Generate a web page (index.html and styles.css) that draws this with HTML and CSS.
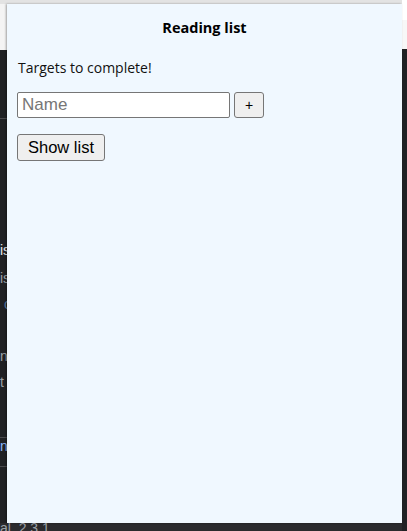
FILE: index.html
```html
<!DOCTYPE html>
<html>
<head>
<meta charset="utf-8">
<link rel="stylesheet" href="styles.css">
</head>
<body>
<div class="backdrop">
  <div class="topstrip"></div>
  <div class="bg-left">
    <div class="bg-line l1"></div>
    <span class="bg-text t1">is</span>
    <span class="bg-text t2">is</span>
    <span class="bg-text t3">c</span>
    <span class="bg-text t4">n</span>
    <span class="bg-text t5">t</span>
    <div class="bg-line l2"></div>
    <span class="bg-text t6">n</span>
    <div class="bg-line l3"></div>
  </div>
  <div class="bg-bottom"><span class="ver">al &nbsp;2.3.1</span></div>
  <div class="bg-right">
    <div class="r-white"></div>
  </div>
</div>
<div class="popup">
  <h1 class="title">Reading list</h1>
  <p class="intro">Targets to complete!</p>
  <div class="add-row">
    <input class="name-input" type="text" placeholder="Name">
    <button class="btn add-btn">+</button>
  </div>
  <button class="btn show-btn">Show list</button>
</div>
</body>
</html>
```

FILE: styles.css
```css
html, body {
  margin: 0;
  padding: 0;
}
body {
  width: 407px;
  height: 531px;
  overflow: hidden;
  background: #202124;
  font-family: "Open Sans", "Noto Sans", sans-serif;
  position: relative;
}
.backdrop {
  position: absolute;
  inset: 0;
}
.topstrip {
  position: absolute;
  left: 0;
  top: 0;
  width: 407px;
  height: 4px;
  background: #e3e3e3;
}
.bg-left {
  position: absolute;
  left: 0;
  top: 4px;
  width: 20px;
  height: 519px;
  background: #202124;
}
.bg-left::before {
  content: "";
  position: absolute;
  left: 0;
  top: 0;
  width: 20px;
  height: 46px;
  background: #f4f4f4;
}
.bg-line {
  position: absolute;
  left: 0;
  width: 20px;
  height: 1px;
  background: #4a4a4d;
}
.l1 { top: 114px; }
.l2 { top: 433px; }
.l3 { top: 462px; }
.bg-text {
  position: absolute;
  left: 0;
  font-family: "Liberation Sans", sans-serif;
  font-size: 14px;
  color: #9aa0a6;
}
.t1 { top: 238px; color: #e8eaed; }
.t2 { top: 266px; }
.t3 { top: 292px; left: 4px; color: #5d7fa8; }
.t4 { top: 344px; left: -2px; }
.t5 { top: 370px; left: 0; }
.t6 { top: 434px; left: -2px; color: #8ab4f8; }
.t4, .t6 { left: 0; letter-spacing: 0; }
.bg-bottom {
  position: absolute;
  left: 0;
  top: 523px;
  width: 407px;
  height: 8px;
  background: #2b2b2e;
  overflow: hidden;
}
.ver {
  position: absolute;
  left: 0;
  top: -3px;
  font-family: "Liberation Sans", sans-serif;
  font-size: 14px;
  line-height: 16px;
  color: #9aa0a6;
}
.bg-right {
  position: absolute;
  left: 402px;
  top: 0;
  width: 5px;
  height: 531px;
  background: #202124;
}
.r-white {
  height: 50px;
  background: #f7f7f7;
  border-top: 20px solid #fff;
  box-sizing: border-box;
  border-bottom: 1px solid #222;
}

.popup {
  position: absolute;
  left: 7px;
  top: 4px;
  width: 395px;
  height: 519px;
  box-sizing: border-box;
  padding: 0 10px;
  background: #f0f8ff;
  box-shadow: -1px 0 2px rgba(0, 0, 0, 0.35);
  display: flex;
  flex-direction: column;
  align-items: flex-start;
}
.title {
  align-self: stretch;
  margin: 14px 0 0;
  font-size: 14.5px;
  line-height: 20px;
  font-weight: 700;
  text-align: center;
  color: #000;
}
.intro {
  margin: 20px 0 0 1px;
  font-size: 14px;
  line-height: 20px;
  color: #111;
}
.add-row {
  display: flex;
  gap: 4px;
  margin-top: 14px;
}
.name-input {
  width: 213px;
  height: 26px;
  box-sizing: border-box;
  margin: 0;
  padding: 1px 4px;
  border: 1px solid #767676;
  border-radius: 2px;
  background: #fff;
  font-family: "Liberation Sans", Arial, sans-serif;
  font-size: 17px;
}
.name-input::placeholder {
  color: #767676;
}
.btn {
  box-sizing: border-box;
  margin: 0;
  border: 1px solid #767676;
  border-radius: 3px;
  background: #efefef;
  color: #000;
  font-family: "Liberation Sans", Arial, sans-serif;
}
.add-btn {
  width: 30px;
  height: 26px;
  padding: 0;
  font-size: 14px;
}
.show-btn {
  margin-top: 16px;
  height: 27px;
  padding: 0 10px;
  font-size: 16.5px;
}
```
